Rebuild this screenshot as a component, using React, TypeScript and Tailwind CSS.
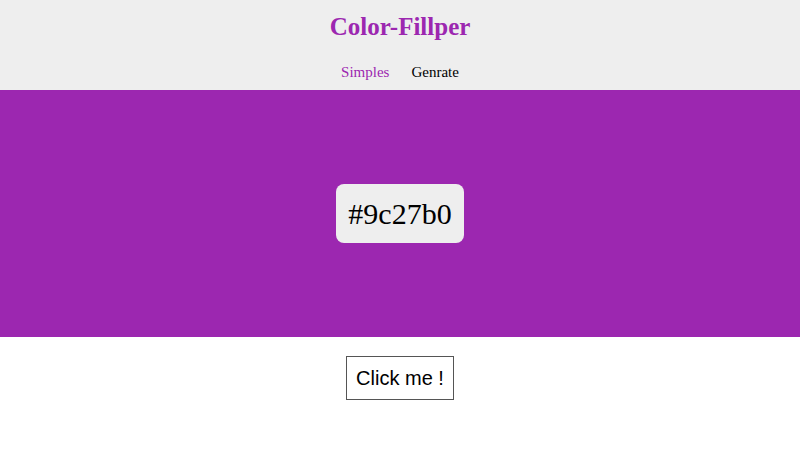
import { useState } from "react";

const serif = { fontFamily: '"Liberation Serif", "Times New Roman", serif' };

export default function App() {
  const [color] = useState("#9c27b0");

  return (
    <div className="min-h-screen bg-white" style={serif}>
      {/* Header */}
      <header className="h-[90px] bg-[#eeeeee] flex flex-col items-center">
        <h1 className="mt-[11px] text-[25px] leading-[32px] font-bold text-[#9c27b0]">Color-Fillper</h1>
        <nav className="mt-[20px] flex gap-[22px] text-[15px] leading-[18px]">
          <a className="text-[#9c27b0]">Simples</a>
          <a className="text-black">Genrate</a>
        </nav>
      </header>

      {/* Color panel */}
      <main
        className="h-[247px] flex items-center justify-center"
        style={{ backgroundColor: color }}
      >
        <div className="h-[59px] px-[12px] flex items-center rounded-lg bg-[#eeeeee] text-[30px] text-black">
          {color}
        </div>
      </main>

      <div className="flex justify-center pt-[19px]">
        <button
          className="h-[44px] px-[9px] border border-[#555] bg-white text-[20px] text-black"
          style={{ fontFamily: '"Liberation Sans", Arial, sans-serif' }}
        >
          Click me !
        </button>
      </div>
    </div>
  );
}
